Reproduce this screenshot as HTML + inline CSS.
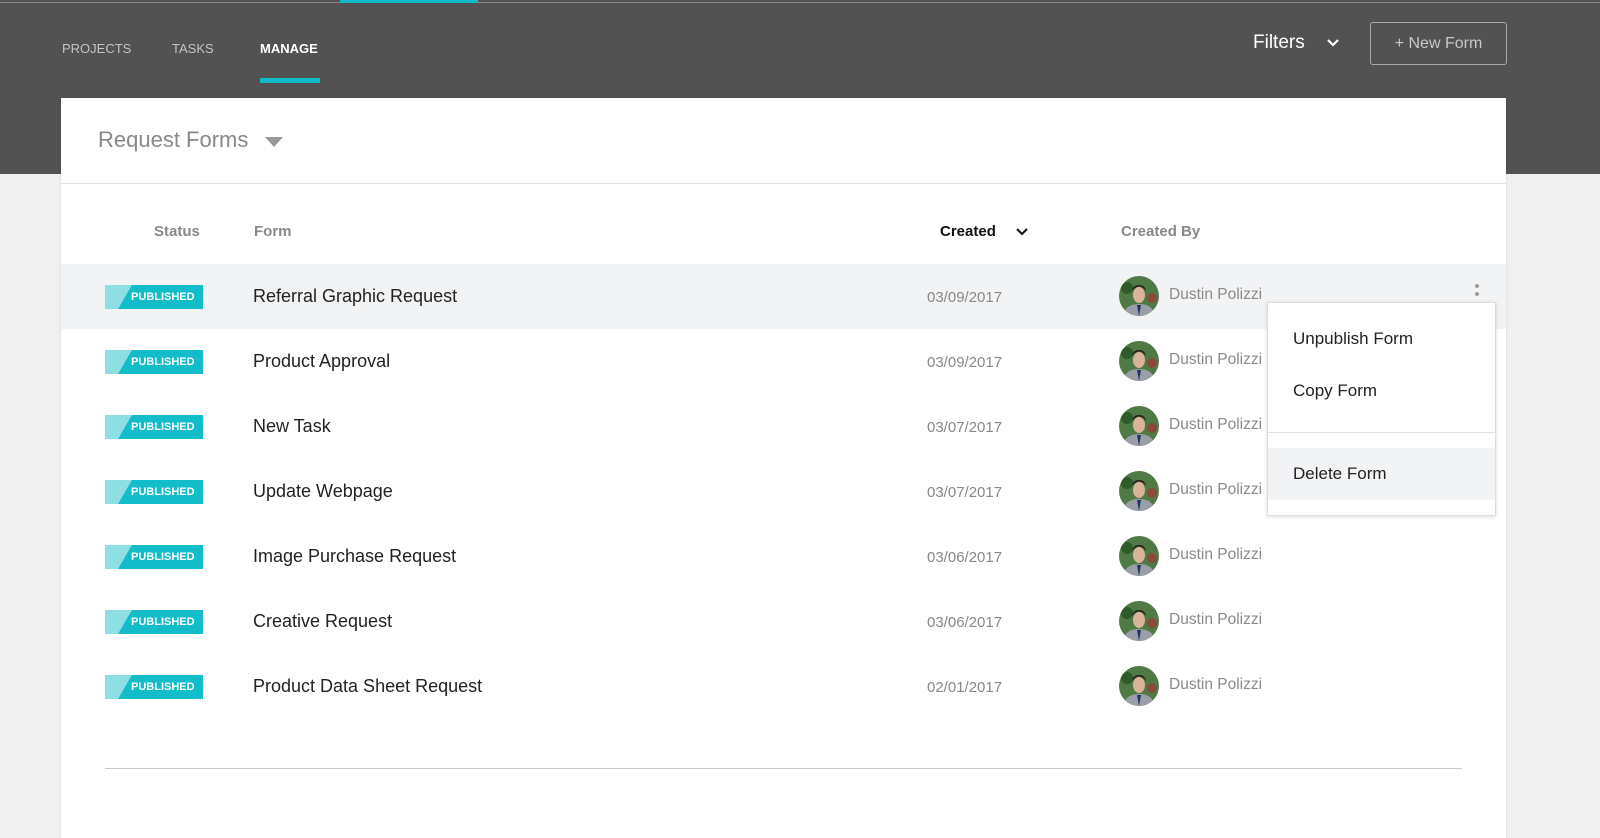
<!DOCTYPE html>
<html><head><style>
*{margin:0;padding:0;box-sizing:border-box}
body{width:1600px;height:829px;background:#f0f0f0;font-family:"Liberation Sans",sans-serif;position:relative;overflow:hidden}
.top{position:absolute;left:0;top:0;width:1600px;height:174px;background:#525252}
.tl{position:absolute;left:0;top:2px;width:1600px;height:1px;background:#8a8a8a}
.teal{position:absolute;left:340px;top:0;width:138px;height:3px;background:#12b9c6}
.nav{position:absolute;top:41px;font-size:13px;color:#c4c4c4}
.card{position:absolute;left:61px;top:98px;width:1445px;height:740px;background:#fff;box-shadow:0 0 2px rgba(0,0,0,.15)}
.abs{position:absolute}
.th{position:absolute;top:223px;font-size:15px;font-weight:bold;color:#888}
.row{position:absolute;left:61px;width:1445px;height:65px}
.badge{position:absolute;left:44px;top:21px;width:98px;height:24px;background:#12bcc9;overflow:hidden}
.badge:before{content:"";position:absolute;left:-10px;top:0;width:30px;height:24px;background:#8ddfe4;transform:skewX(-30deg)}
.badge span{position:absolute;left:26px;top:6px;font-size:11px;font-weight:bold;color:#fff;letter-spacing:0}
.fn{position:absolute;left:192px;top:22px;font-size:18px;color:#222}
.dt{position:absolute;left:866px;top:25px;font-size:15px;color:#888}
.av{position:absolute;left:1058px;top:12px;width:40px;height:40px}
.nm{position:absolute;left:1108px;top:22px;font-size:15.5px;color:#8a8a8a}
.menu{position:absolute;left:1267px;top:302px;width:229px;height:214px;background:#fff;border:1px solid #ddd;box-shadow:0 1px 4px rgba(0,0,0,.15)}
.mi{position:absolute;left:25px;font-size:17px;color:#222}
</style></head><body>
<div class="top"></div><div class="tl"></div><div class="teal"></div>
<div class="nav" style="left:62px">PROJECTS</div>
<div class="nav" style="left:172px">TASKS</div>
<div class="nav" style="left:260px;color:#fff;font-weight:bold">MANAGE</div>
<div class="abs" style="left:260px;top:78px;width:60px;height:5px;background:#12b9c6"></div>
<div class="abs" style="left:1253px;top:32px;font-size:19px;color:#fff">Filters</div>
<svg class="abs" style="left:1326px;top:38px" width="14" height="10"><path d="M2 2l5 5 5-5" stroke="#fff" stroke-width="2.2" fill="none"/></svg>
<div class="abs" style="left:1370px;top:22px;width:137px;height:43px;border:1px solid #aaa;border-radius:3px;color:#c8c8c8;font-size:16px;text-align:center;line-height:41px">+ New Form</div>
<div class="card"></div>
<div class="abs" style="left:98px;top:127px;font-size:22px;color:#888">Request Forms</div>
<div class="abs" style="left:265px;top:137px;width:0;height:0;border-left:9px solid transparent;border-right:9px solid transparent;border-top:10px solid #999"></div>
<div class="abs" style="left:61px;top:183px;width:1445px;height:1px;background:#e0e0e0"></div>
<div class="th" style="left:154px">Status</div>
<div class="th" style="left:254px">Form</div>
<div class="th" style="left:940px;color:#111">Created</div>
<svg class="abs" style="left:1015px;top:227px" width="14" height="10"><path d="M2 2l5 5 5-5" stroke="#111" stroke-width="2" fill="none"/></svg>
<div class="th" style="left:1121px">Created By</div>

<div class="row" style="top:264px;background:#f2f3f5"></div>
<svg width="0" height="0" style="position:absolute"><defs><clipPath id="c"><circle cx="20" cy="20" r="20"/></clipPath></defs></svg>
<div class="row" style="top:264px"><div class="badge"><span>PUBLISHED</span></div><div class="fn">Referral Graphic Request</div><div class="dt">03/09/2017</div><svg class="av" viewBox="0 0 40 40"><g clip-path="url(#c)"><rect width="40" height="40" fill="#4f7a45"/><circle cx="8" cy="12" r="6" fill="#2f5a2a"/><circle cx="33" cy="22" r="5" fill="#8a4a3a"/><path d="M4 40q2-12 16-12t16 12z" fill="#9a9ea6"/><path d="M18 29l2 11 2-11z" fill="#223366"/><ellipse cx="20" cy="19" rx="6" ry="8" fill="#d9b49a"/><path d="M13 15q7-9 14 0q-1-6-7-6t-7 6z" fill="#2a1e18"/></g></svg><div class="nm">Dustin Polizzi</div>
<div class="abs" style="left:1414px;top:20px;width:4px;height:4px;border-radius:2px;background:#999"></div><div class="abs" style="left:1414px;top:28px;width:4px;height:4px;border-radius:2px;background:#999"></div></div>
<div class="row" style="top:329px"><div class="badge"><span>PUBLISHED</span></div><div class="fn">Product Approval</div><div class="dt">03/09/2017</div><svg class="av" viewBox="0 0 40 40"><g clip-path="url(#c)"><rect width="40" height="40" fill="#4f7a45"/><circle cx="8" cy="12" r="6" fill="#2f5a2a"/><circle cx="33" cy="22" r="5" fill="#8a4a3a"/><path d="M4 40q2-12 16-12t16 12z" fill="#9a9ea6"/><path d="M18 29l2 11 2-11z" fill="#223366"/><ellipse cx="20" cy="19" rx="6" ry="8" fill="#d9b49a"/><path d="M13 15q7-9 14 0q-1-6-7-6t-7 6z" fill="#2a1e18"/></g></svg><div class="nm">Dustin Polizzi</div></div>
<div class="row" style="top:394px"><div class="badge"><span>PUBLISHED</span></div><div class="fn">New Task</div><div class="dt">03/07/2017</div><svg class="av" viewBox="0 0 40 40"><g clip-path="url(#c)"><rect width="40" height="40" fill="#4f7a45"/><circle cx="8" cy="12" r="6" fill="#2f5a2a"/><circle cx="33" cy="22" r="5" fill="#8a4a3a"/><path d="M4 40q2-12 16-12t16 12z" fill="#9a9ea6"/><path d="M18 29l2 11 2-11z" fill="#223366"/><ellipse cx="20" cy="19" rx="6" ry="8" fill="#d9b49a"/><path d="M13 15q7-9 14 0q-1-6-7-6t-7 6z" fill="#2a1e18"/></g></svg><div class="nm">Dustin Polizzi</div></div>
<div class="row" style="top:459px"><div class="badge"><span>PUBLISHED</span></div><div class="fn">Update Webpage</div><div class="dt">03/07/2017</div><svg class="av" viewBox="0 0 40 40"><g clip-path="url(#c)"><rect width="40" height="40" fill="#4f7a45"/><circle cx="8" cy="12" r="6" fill="#2f5a2a"/><circle cx="33" cy="22" r="5" fill="#8a4a3a"/><path d="M4 40q2-12 16-12t16 12z" fill="#9a9ea6"/><path d="M18 29l2 11 2-11z" fill="#223366"/><ellipse cx="20" cy="19" rx="6" ry="8" fill="#d9b49a"/><path d="M13 15q7-9 14 0q-1-6-7-6t-7 6z" fill="#2a1e18"/></g></svg><div class="nm">Dustin Polizzi</div></div>
<div class="row" style="top:524px"><div class="badge"><span>PUBLISHED</span></div><div class="fn">Image Purchase Request</div><div class="dt">03/06/2017</div><svg class="av" viewBox="0 0 40 40"><g clip-path="url(#c)"><rect width="40" height="40" fill="#4f7a45"/><circle cx="8" cy="12" r="6" fill="#2f5a2a"/><circle cx="33" cy="22" r="5" fill="#8a4a3a"/><path d="M4 40q2-12 16-12t16 12z" fill="#9a9ea6"/><path d="M18 29l2 11 2-11z" fill="#223366"/><ellipse cx="20" cy="19" rx="6" ry="8" fill="#d9b49a"/><path d="M13 15q7-9 14 0q-1-6-7-6t-7 6z" fill="#2a1e18"/></g></svg><div class="nm">Dustin Polizzi</div></div>
<div class="row" style="top:589px"><div class="badge"><span>PUBLISHED</span></div><div class="fn">Creative Request</div><div class="dt">03/06/2017</div><svg class="av" viewBox="0 0 40 40"><g clip-path="url(#c)"><rect width="40" height="40" fill="#4f7a45"/><circle cx="8" cy="12" r="6" fill="#2f5a2a"/><circle cx="33" cy="22" r="5" fill="#8a4a3a"/><path d="M4 40q2-12 16-12t16 12z" fill="#9a9ea6"/><path d="M18 29l2 11 2-11z" fill="#223366"/><ellipse cx="20" cy="19" rx="6" ry="8" fill="#d9b49a"/><path d="M13 15q7-9 14 0q-1-6-7-6t-7 6z" fill="#2a1e18"/></g></svg><div class="nm">Dustin Polizzi</div></div>
<div class="row" style="top:654px"><div class="badge"><span>PUBLISHED</span></div><div class="fn">Product Data Sheet Request</div><div class="dt">02/01/2017</div><svg class="av" viewBox="0 0 40 40"><g clip-path="url(#c)"><rect width="40" height="40" fill="#4f7a45"/><circle cx="8" cy="12" r="6" fill="#2f5a2a"/><circle cx="33" cy="22" r="5" fill="#8a4a3a"/><path d="M4 40q2-12 16-12t16 12z" fill="#9a9ea6"/><path d="M18 29l2 11 2-11z" fill="#223366"/><ellipse cx="20" cy="19" rx="6" ry="8" fill="#d9b49a"/><path d="M13 15q7-9 14 0q-1-6-7-6t-7 6z" fill="#2a1e18"/></g></svg><div class="nm">Dustin Polizzi</div></div>
<div class="abs" style="left:105px;top:768px;width:1357px;height:1px;background:#c8c8c8"></div>
<div class="menu">
<div class="mi" style="top:26px">Unpublish Form</div>
<div class="mi" style="top:78px">Copy Form</div>
<div class="abs" style="left:0;top:129px;width:227px;height:1px;background:#e2e2e2"></div>
<div class="abs" style="left:0;top:145px;width:227px;height:52px;background:#f2f3f5"></div>
<div class="mi" style="top:161px">Delete Form</div>
</div>
</body></html>
